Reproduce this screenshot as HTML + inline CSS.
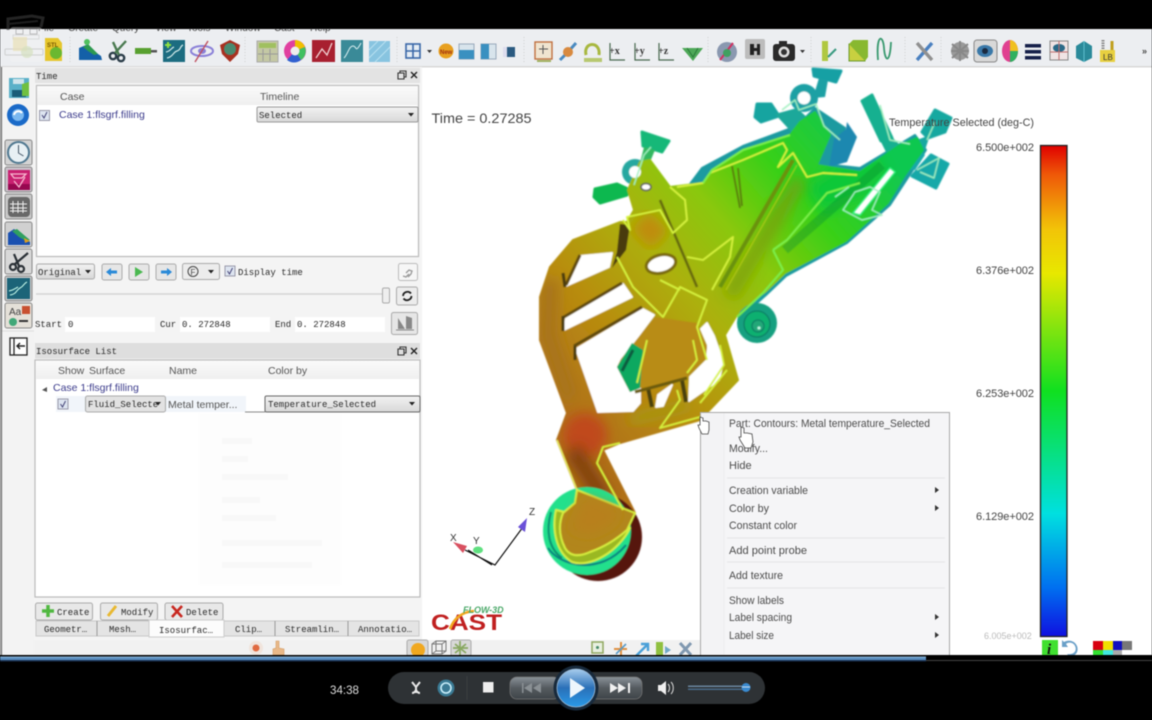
<!DOCTYPE html>
<html><head><meta charset="utf-8"><title>FLOW-3D CAST</title>
<style>
html,body{margin:0;padding:0;background:#000;width:1152px;height:720px;overflow:hidden}
svg{display:block;position:absolute;left:0;top:0;filter:blur(.45px)}
.m{font-family:"Liberation Mono",monospace;font-size:9px;fill:#2a2a2a}
.s{font-family:"Liberation Sans",sans-serif;font-size:10.5px;fill:#555}
.u{font-family:"Liberation Sans",sans-serif;font-size:10px;fill:#444}
.b{fill:#3c3c8c;font-family:"Liberation Sans",sans-serif;font-size:10.5px}
</style></head><body>
<svg width="1152" height="720" viewBox="0 0 1152 720" xmlns="http://www.w3.org/2000/svg">
<defs>
<linearGradient id="mg" gradientUnits="userSpaceOnUse" x1="570" y1="420" x2="880" y2="150">
<stop offset="0" stop-color="#b07018"/><stop offset=".22" stop-color="#b88c10"/><stop offset=".42" stop-color="#acb008"/><stop offset=".6" stop-color="#8ac808"/><stop offset=".78" stop-color="#38d018"/><stop offset="1" stop-color="#10c850"/></linearGradient>
<linearGradient id="cb" x1="0" y1="0" x2="0" y2="1"><stop offset="0" stop-color="#e00000"/><stop offset=".06" stop-color="#ef5a08"/><stop offset=".17" stop-color="#f2c408"/><stop offset=".26" stop-color="#e8e800"/><stop offset=".5" stop-color="#10e020"/><stop offset=".75" stop-color="#00e0e0"/><stop offset=".9" stop-color="#0070f0"/><stop offset="1" stop-color="#1010e0"/></linearGradient>
<linearGradient id="hd" x1="0" y1="0" x2="0" y2="1"><stop offset="0" stop-color="#fafafa"/><stop offset="1" stop-color="#efefef"/></linearGradient>
<linearGradient id="cmb" x1="0" y1="0" x2="0" y2="1"><stop offset="0" stop-color="#f2f2f2"/><stop offset="1" stop-color="#d8d8d8"/></linearGradient>
<linearGradient id="play" x1="0" y1="0" x2="0" y2="1"><stop offset="0" stop-color="#a8cdee"/><stop offset=".5" stop-color="#2a70b8"/><stop offset="1" stop-color="#2a9ae8"/></linearGradient>
<linearGradient id="seg" x1="0" y1="0" x2="0" y2="1"><stop offset="0" stop-color="#8a9298"/><stop offset=".5" stop-color="#555b60"/><stop offset="1" stop-color="#3e4448"/></linearGradient>
<filter id="bl" x="-50%" y="-50%" width="200%" height="200%"><feGaussianBlur stdDeviation="6"/></filter>
<filter id="soft" x="-5%" y="-5%" width="110%" height="110%"><feGaussianBlur stdDeviation=".5"/></filter>
<clipPath id="bc"><path d="M627 222L634 210L628 190L640 162L650 160L670 187L703 183L712 172L743 150L790 135L800 122L815 112L830 135L817 165L860 172L900 145L917 138L923 150L905 175L888 203L846 241L785 273L765 292L740 310L725 335L738 380L700 420L620 443L603 450L635 513L577 490L557 440L567 413L540 340L540 297L550 267L573 240L620 222Z"/></clipPath>
</defs>

<!-- app background -->
<rect x="0" y="29" width="1152" height="628" fill="#fff"/>
<rect x="0" y="29" width="1152" height="38" fill="#eceef1"/>
<rect x="0" y="66" width="1152" height="1.5" fill="#d8d8d8"/>
<rect x="0" y="67" width="422" height="590" fill="#f4f4f4"/>
<rect x="0" y="640" width="700" height="16" fill="#f1f1f1"/>
<rect x="0" y="67" width="1.5" height="590" fill="#555"/>
<text x="38" y="31" class="u">File</text><text x="68" y="31" class="u">Create</text><text x="112" y="31" class="u">Query</text><text x="155" y="31" class="u">View</text><text x="187" y="31" class="u">Tools</text><text x="225" y="31" class="u">Window</text><text x="274" y="31" class="u">Cast</text><text x="310" y="31" class="u">Help</text>

<!-- top black -->
<rect x="0" y="0" width="1152" height="28.500" fill="#000"/>

<!-- toolbar separators -->
<g stroke="#cfcfcf" stroke-dasharray="1 2">
<line x1="70" y1="37" x2="70" y2="64"/><line x1="245" y1="37" x2="245" y2="64"/><line x1="397" y1="37" x2="397" y2="64"/><line x1="524" y1="37" x2="524" y2="64"/><line x1="708" y1="37" x2="708" y2="64"/><line x1="811" y1="37" x2="811" y2="64"/><line x1="905" y1="37" x2="905" y2="64"/><line x1="941" y1="37" x2="941" y2="64"/>
</g>

<!-- top toolbar left -->
<path d="M45 38h13l4 5v18H45z" fill="#e6c62c"/><circle cx="56" cy="53" r="6" fill="#6ab830"/><text x="47" y="47" font-family="Liberation Sans" font-size="6" font-weight="bold" fill="#7a5a00">STL</text>
<path d="M79 60V48l7-3 6 5 9 6 1 4z" fill="#1460a8"/><path d="M83 47l5-3 4 4 6 6-4 1-6-4z" fill="#2c9a50"/><circle cx="87" cy="42" r="3" fill="#50c060"/>
<g fill="none" stroke="#2a3c48" stroke-width="2.400"><circle cx="113" cy="56" r="3.200"/><circle cx="121" cy="58" r="3.200"/><path d="M115 53l11-12M119 55l-6-13" stroke="#4a7a50"/></g>
<rect x="135" y="48" width="16" height="6" fill="#58a030"/><rect x="151" y="50" width="6" height="2.500" fill="#555"/>
<rect x="163" y="40" width="22" height="22" fill="#1c6c80"/><path d="M167 58c6-1 6-6 10-7s3-5 6-6M166 52c5-1 5-4 8-5" stroke="#cfe8e8" fill="none" stroke-width="1.200"/><path d="M168 42v6M165 45h6" stroke="#90e040" stroke-width="2"/>
<ellipse cx="202" cy="51" rx="11" ry="5" fill="none" stroke="#8a80d8" stroke-width="2"/><ellipse cx="202" cy="51" rx="4" ry="3" fill="#8a80d8"/><line x1="195" y1="62" x2="208" y2="41" stroke="#c05060" stroke-width="1.400"/>
<path d="M220 45l10-5 10 5-2 9-8 8-8-8z" fill="#a83020"/><circle cx="230" cy="49" r="6" fill="#4a8a70"/>
<rect x="257" y="41" width="21" height="21" fill="#c4c8a4" stroke="#aaa"/><rect x="259" y="43" width="17" height="5" fill="#a0c060"/><path d="M263 49v12M270 49v12M258 54h20" stroke="#999"/>
<circle cx="295" cy="51" r="11" fill="#e040a0"/><path d="M295 51V40a11 11 0 0 1 10 7z" fill="#f0c000"/><path d="M295 51l10-4a11 11 0 0 1-4 13z" fill="#40c060"/><path d="M295 51l6 9a11 11 0 0 1-14 0z" fill="#3060d0"/><circle cx="295" cy="51" r="4.500" fill="#eee"/>
<rect x="312" y="40" width="23" height="22" fill="#a82030"/><path d="M316 58l6-9 5 6 5-12" stroke="#f0d0d0" fill="none" stroke-width="1.300"/>
<rect x="341" y="40" width="22" height="22" fill="#3a8a98"/><path d="M344 58c4-4 5-12 9-12s2 8 8-3" stroke="#d8eef0" fill="none"/>
<rect x="369" y="41" width="21" height="21" fill="#88c4e0"/><path d="M369 50l9-9M369 58l17-17M375 62l15-15" stroke="#b8e0f0"/>
<rect x="406" y="44" width="14" height="14" fill="#e4ecf4" stroke="#3a68a8" stroke-width="1.600"/><path d="M413 44v14M406 51h14" stroke="#3a68a8" stroke-width="1.600"/><path d="M427 50h5l-2.500 3z" fill="#333"/>
<circle cx="446" cy="51" r="7.500" fill="#e8a020"/><text x="440" y="54" font-family="Liberation Sans" font-size="6" font-weight="bold" fill="#a03010">New</text>
<rect x="459" y="44" width="15" height="15" fill="#d8e4ec" stroke="#9ab"/><rect x="459" y="50" width="15" height="9" fill="#3a90c0"/>
<rect x="481" y="44" width="15" height="15" fill="#d8e4ec" stroke="#9ab"/><rect x="481" y="44" width="8" height="15" fill="#3a90c0"/>
<rect x="503" y="47" width="12" height="10" fill="#dde"/><rect x="507" y="47" width="8" height="10" fill="#2a5a80"/>
<rect x="535" y="42" width="17" height="17" fill="#f0e4d0" stroke="#c07040" stroke-width="1.400"/><path d="M543 45v9M539 49h9" stroke="#555"/><rect x="537" y="60" width="14" height="2" fill="#a0b060"/>
<path d="M560 60l8-8 8-9" stroke="#4a8ac0" stroke-width="3"/><circle cx="568" cy="52" r="5" fill="#d88a40"/>
<path d="M586 55c-3-14 15-14 13 0" fill="none" stroke="#a8b840" stroke-width="3"/><rect x="584" y="58" width="18" height="4" fill="#b8c870"/>
<g font-family="Liberation Serif" font-size="10" font-weight="bold" fill="#333"><text x="609" y="54">+x</text><text x="634" y="54">+y</text><text x="658" y="54">+z</text></g>
<path d="M610 43v17h15M635 43v17h15M659 43v17h15" fill="none" stroke="#4a6a50" stroke-width="1.200"/>
<path d="M682 48h21l-10 13z" fill="#4ea858"/><path d="M687 48l6 9 5-9" stroke="#2a7a3a" fill="none"/>
<circle cx="727" cy="52" r="10" fill="#8a98b0"/><path d="M720 60l13-17" stroke="#d03060" stroke-width="2"/><circle cx="727" cy="53" r="4" fill="#40a060"/>
<rect x="745" y="39" width="20" height="20" rx="2" fill="#bcbcbc"/><path d="M750 44h4v4h3v-4h3v11h-3v-4h-3v4h-4z" fill="#222"/>
<rect x="773" y="44" width="22" height="17" rx="3" fill="#2a2a2a"/><rect x="779" y="41" width="8" height="4" fill="#2a2a2a"/><circle cx="784" cy="52" r="5.500" fill="#ddd"/><circle cx="784" cy="52" r="3" fill="#333"/><path d="M800 50h5l-2.500 3z" fill="#333"/>
<path d="M822 41h6v20h-6z" fill="#b0c840"/><path d="M828 57l8-8" stroke="#3a9a80" stroke-width="2"/>
<rect x="849" y="44" width="16" height="17" fill="#c8d040" stroke="#6a9a30"/><path d="M849 44l4-4h15v17l-3 4" fill="#88b830"/>
<path d="M878 60c-2-26 5-26 6-12s6 16 7-6" fill="none" stroke="#3a9a70" stroke-width="1.800"/>
<path d="M917 60l15-17" stroke="#4a80c0" stroke-width="3.400"/><path d="M917 43l15 17" stroke="#909090" stroke-width="3.400"/>
<circle cx="960" cy="51" r="9" fill="#9a9a9a"/><path d="M952 44l16 14M968 44l-16 14M960 41v20M951 51h18" stroke="#888" stroke-width="2"/>
<rect x="974" y="40" width="23" height="22" rx="3" fill="#d8d8d8" stroke="#888"/><ellipse cx="985" cy="51" rx="8" ry="6" fill="#3a78a8"/><circle cx="985" cy="51" r="3" fill="#1a2a40"/>
<ellipse cx="1010" cy="51" rx="8" ry="11" fill="#e04090"/><path d="M1010 40a8 11 0 0 1 8 11h-8z" fill="#f0c020"/><path d="M1010 51h8a8 11 0 0 1-8 11z" fill="#30b060"/>
<path d="M1025 44h16v3.500h-16zM1025 50h16v3.500h-16zM1025 56h16v3.500h-16z" fill="#16204a"/>
<rect x="1050" y="41" width="18" height="19" fill="#f0e4e4" stroke="#888"/><ellipse cx="1059" cy="48" rx="6" ry="4" fill="#2a6a88"/><path d="M1059 41v19M1050 52h18" stroke="#c07070"/>
<path d="M1076 46l8-5 8 5v12l-8 4-8-4z" fill="#2a8a9a"/><path d="M1084 41v21" stroke="#60c0d0"/>
<rect x="1100" y="50" width="15" height="12" fill="#e8d040"/><text x="1103" y="60" font-family="Liberation Sans" font-size="8" fill="#333">LB</text><path d="M1112 41v9" stroke="#c0a020" stroke-width="3"/><path d="M1103 40v9" stroke="#888" stroke-dasharray="1.500 1" stroke-width="3"/>
<text x="1142" y="54" font-family="Liberation Sans" font-size="9" font-weight="bold" fill="#444">»</text>

<!-- left vertical toolbar -->
<rect x="0" y="67" width="34" height="590" fill="#f3f3f3"/>
<rect x="1" y="67" width="1" height="590" fill="#555"/>
<path d="M9 78h20v20H9z" fill="#5ab0c8"/><rect x="12" y="90" width="14" height="7" fill="#1a5c78"/><rect x="13" y="79" width="11" height="5" fill="#d0e4ec"/><path d="M22 84l7-2v14h-7z" fill="#70c040"/>
<circle cx="18" cy="115" r="11" fill="#1a6ac8"/><circle cx="18" cy="115" r="6" fill="#7ab8f0"/><path d="M14 115a4.500 4.500 0 0 1 8-2" stroke="#fff" fill="none" stroke-width="2"/>
<rect x="5" y="140" width="27" height="25" rx="2" fill="#d4d4d4" stroke="#888"/><circle cx="18.500" cy="152.500" r="10.500" fill="#e8f0f4" stroke="#507890" stroke-width="2"/><path d="M18.500 145v8l5 3" stroke="#456" fill="none"/>
<rect x="5" y="167" width="27" height="25" rx="2" fill="#c8c0c8" stroke="#888"/><rect x="8" y="170" width="22" height="20" fill="#c82070"/><rect x="8" y="184" width="22" height="6" fill="#980850"/><path d="M11 174h15l-4 4H14zM14 181l5 6 6-10" stroke="#f8b8d0" fill="none" stroke-width="1.300"/>
<rect x="5" y="194" width="27" height="25" rx="2" fill="#c8c8c8" stroke="#888"/><rect x="8" y="197" width="22" height="20" rx="4" fill="#686868"/><path d="M13 201v12M18 201v12M23 201v12M10 204h17M10 208h17M10 211h17" stroke="#eee"/>
<rect x="5" y="222" width="27" height="25" rx="2" fill="#d0d0d0" stroke="#888"/><path d="M8 245v-12l6-4 7 5 9 8v3z" fill="#1a50b0"/><path d="M12 231l5-2 7 6 6 5-4 1-7-4z" fill="#30a060"/><path d="M24 238l6 3-5 2z" fill="#e0a020"/>
<rect x="5" y="249" width="27" height="25" rx="2" fill="#d8d8d8" stroke="#888"/><g fill="none" stroke="#2a3036" stroke-width="2.200"><circle cx="13" cy="267" r="3"/><circle cx="21" cy="269" r="3"/><path d="M15 264l13-11M19 266l-5-12"/></g>
<rect x="5" y="276" width="27" height="25" rx="2" fill="#c8c8c8" stroke="#888"/><rect x="7" y="278" width="23" height="21" fill="#1c6478"/><path d="M10 295c7-1 6-5 10-7s4-5 7-6M9 291c5-1 7-3 9-4" stroke="#cfe" fill="none"/>
<rect x="5" y="303" width="27" height="25" rx="2" fill="#e4e0d8" stroke="#888"/><text x="9" y="315" font-family="Liberation Sans" font-size="10" fill="#444">Aa</text><rect x="22" y="306" width="8" height="8" fill="#c85030"/><circle cx="13" cy="322" r="4" fill="#40a878"/><path d="M19 321h9" stroke="#333" stroke-width="2"/>
<line x1="2" y1="331" x2="34" y2="331" stroke="#ddd"/>
<rect x="10" y="338" width="17" height="17" fill="#fff" stroke="#222" stroke-width="1.300"/><path d="M14 338v17" stroke="#222" stroke-width="1.300"/><path d="M25 346h-8m3-3l-3 3 3 3" fill="none" stroke="#222" stroke-width="1.400"/>

<!-- TIME panel -->
<rect x="35" y="68" width="385" height="15" fill="#e3e3e3"/>
<text x="36" y="79" class="m">Time</text>
<path d="M398 73h6v6h-6zM400 73v-2h6v6h-2" fill="none" stroke="#333" stroke-width="1.100"/>
<path d="M411 72l6 6m0-6l-6 6" stroke="#222" stroke-width="1.400"/>
<rect x="36.500" y="85.500" width="382" height="171" fill="#fff" stroke="#bbb" stroke-width="1.200"/>
<rect x="37" y="86" width="381" height="19" fill="url(#hd)"/>
<text x="60" y="100" class="s">Case</text><text x="260" y="100" class="s">Timeline</text>
<rect x="39.500" y="110.500" width="10" height="10" fill="#dde4f0" stroke="#99a"/><path d="M42 115l2 3 3-6" stroke="#447" fill="none"/>
<text x="59" y="118" class="b">Case 1:flsgrf.filling</text>
<rect x="257" y="107" width="161" height="15" rx="1.500" fill="url(#cmb)" stroke="#999"/>
<text x="259" y="118" class="m">Selected</text><path d="M408 113h6l-3 3.500z" fill="#222"/>

<!-- controls -->
<rect x="36.500" y="264" width="58" height="15" rx="2" fill="url(#cmb)" stroke="#aaa"/><text x="38" y="275" class="m">Original</text><path d="M85 270h6l-3 3.500z" fill="#222"/>
<rect x="102" y="264" width="20" height="16" rx="2" fill="#e6e6e6" stroke="#aaa"/><path d="M106 272l5-4v2.500h6v3h-6v2.500z" fill="#2a8ad8"/>
<rect x="129" y="264" width="20" height="16" rx="2" fill="#e6e6e6" stroke="#aaa"/><path d="M135 267l8 5-8 5z" fill="#4ab850"/>
<rect x="156" y="264" width="20" height="16" rx="2" fill="#e6e6e6" stroke="#aaa"/><path d="M172 272l-5-4v2.500h-6v3h6v2.500z" fill="#2a8ad8"/>
<rect x="182.500" y="263.500" width="37" height="16" rx="2" fill="#ececec" stroke="#aaa"/><circle cx="193" cy="271.500" r="5" fill="none" stroke="#444"/><text x="190.500" y="275" font-family="Liberation Sans" font-size="8" fill="#444">F</text><path d="M208 270h6l-3 3.500z" fill="#222"/>
<rect x="225" y="266" width="10" height="10" fill="#dde4f0" stroke="#99a"/><path d="M227.500 271l2 3 3-6" stroke="#447" fill="none"/>
<text x="238" y="275" class="m">Display time</text>
<rect x="398.500" y="263.500" width="19" height="17" rx="2" fill="#f6f6f6" stroke="#bbb"/><path d="M403 276l3 1 3-3m-3-1l3-3 3 1-1 3-3 3" fill="none" stroke="#999" stroke-width="1.300"/>
<line x1="36" y1="294" x2="384" y2="294" stroke="#d4d4d4" stroke-width="1.500"/>
<rect x="382.500" y="288" width="7" height="15" rx="1.500" fill="#eee" stroke="#aaa"/>
<rect x="396.500" y="287" width="21" height="18" rx="2" fill="#ececec" stroke="#aaa"/><path d="M403 296a4.500 4.500 0 0 1 8-2.500M411.500 296a4.500 4.500 0 0 1-8 2.500" fill="none" stroke="#222" stroke-width="1.800"/>
<text x="35" y="327" class="m">Start</text><rect x="65" y="317" width="90" height="15" fill="#fff"/><text x="68" y="327" class="m">0</text>
<text x="160" y="327" class="m">Cur</text><rect x="180" y="317" width="90" height="15" fill="#fff"/><text x="182" y="327" class="m">0. 272848</text>
<text x="275" y="327" class="m">End</text><rect x="295" y="317" width="90" height="15" fill="#fff"/><text x="297" y="327" class="m">0. 272848</text>
<rect x="391.500" y="312.500" width="26" height="22" rx="2" fill="#e6e6e6" stroke="#aaa"/><path d="M398 318v11h7zM406 316l6 2v11h-6z" fill="#888"/><path d="M396 330h18" stroke="#888"/>

<!-- ISOSURFACE panel -->
<rect x="35" y="343" width="385" height="15.500" fill="#dedede"/>
<text x="36" y="354" class="m">Isosurface List</text>
<path d="M398 349h6v6h-6zM400 349v-2h6v6h-2" fill="none" stroke="#333" stroke-width="1.100"/>
<path d="M411 348l6 6m0-6l-6 6" stroke="#222" stroke-width="1.400"/>
<rect x="35" y="360" width="385" height="237" fill="#fff" stroke="#bbb" stroke-width="1.200"/>
<rect x="36" y="361" width="383" height="18" fill="url(#hd)"/>
<text x="58" y="374" class="s">Show</text><text x="89" y="374" class="s">Surface</text><text x="169" y="374" class="s">Name</text><text x="268" y="374" class="s">Color by</text>
<path d="M42 390l5-3v5z" fill="#555"/>
<text x="53" y="391" class="b">Case 1:flsgrf.filling</text>
<rect x="56" y="396" width="190" height="16" fill="#f1f5fa"/>
<rect x="58" y="399" width="10" height="10" fill="#dde4f0" stroke="#99a"/><path d="M60.500 404l2 3 3-6" stroke="#447" fill="none"/>
<rect x="85.500" y="396" width="80" height="16" rx="2" fill="#e2e2e2" stroke="#aaa"/><text x="88" y="407" class="m">Fluid_Selecte</text><path d="M155 402h6l-3 3.500z" fill="#222"/>
<text x="168" y="408" class="s">Metal temper...</text>
<path d="M245 412h20" stroke="#888"/>
<rect x="265" y="396" width="155" height="16" rx="1.500" fill="url(#cmb)" stroke="#666"/><text x="268" y="407" class="m" font-size="8.500">Temperature_Selected</text><path d="M409 402h6l-3 3.500z" fill="#222"/>
<rect x="199" y="413" width="142" height="172" fill="#fdfdfd"/>
<g fill="#f8f8f8"><rect x="222" y="438" width="30" height="6"/><rect x="222" y="456" width="26" height="6"/><rect x="222" y="474" width="66" height="6"/><rect x="222" y="497" width="38" height="6"/><rect x="222" y="515" width="54" height="6"/><rect x="222" y="540" width="100" height="6"/><rect x="222" y="562" width="90" height="6"/></g>

<!-- action buttons -->
<rect x="35.500" y="603" width="57" height="17" rx="2" fill="#e8e8e8" stroke="#aaa"/><path d="M42 611h12M48 605v12" stroke="#50b840" stroke-width="3.500"/><text x="57" y="615" class="m">Create</text>
<rect x="100.500" y="603" width="57" height="17" rx="2" fill="#e8e8e8" stroke="#aaa"/><path d="M108 616l8-10" stroke="#e8b830" stroke-width="3"/><text x="121" y="615" class="m">Modify</text>
<rect x="165" y="603" width="58" height="17" rx="2" fill="#e8e8e8" stroke="#aaa"/><path d="M172 606l10 11m0-11l-10 11" stroke="#c82820" stroke-width="2.600"/><text x="186" y="615" class="m">Delete</text>

<!-- tabs -->
<rect x="36" y="621" width="383" height="15" fill="#e4e4e4" stroke="#c8c8c8"/>
<path d="M97 621v15M275 621v15M348 621v15" stroke="#999"/>
<rect x="149" y="620" width="75" height="17" fill="#fcfcfc" stroke="#ccc"/>
<text x="44" y="632" class="m">Geometr…</text><text x="109" y="632" class="m">Mesh…</text><text x="159" y="633" class="m">Isosurfac…</text><text x="235" y="632" class="m">Clip…</text><text x="285" y="632" class="m">Streamlin…</text><text x="358" y="632" class="m">Annotatio…</text>

<!-- bottom bar icons -->
<circle cx="256" cy="648" r="7" fill="#f0e4dc"/><circle cx="256" cy="648" r="3.500" fill="#e06a40"/>
<path d="M273 655v-6l3-1v-7h3v7l5 1v6z" fill="#e8b888" stroke="#d49a60" stroke-width=".6"/>
<rect x="407" y="640" width="21" height="16" rx="2" fill="#d8d8d8" stroke="#aaa"/><circle cx="418" cy="650" r="7" fill="#f0a820"/>
<path d="M432 644h10v10h-10zM436 641h10v10h-10zM432 644l4-3M442 644l4-3M442 654l4-3M432 654l4-3" fill="none" stroke="#777"/>
<rect x="451" y="640" width="20" height="16" rx="2" fill="#d8d8d8" stroke="#aaa"/><path d="M455 644l11 9m0-9l-11 9M460 641v14M453 648h15" stroke="#88a860" stroke-width="1.700"/>
<rect x="592" y="642" width="11" height="11" fill="#e8f0e0" stroke="#90a860" stroke-width="1.500"/><circle cx="597.500" cy="647.500" r="1.500" fill="#486"/>
<path d="M614 649h13M621 642v13" stroke="#e09040" stroke-width="2"/><path d="M616 654l10-10" stroke="#5a9ac8" stroke-width="1.600"/>
<path d="M636 656l12-12m-7 0h7v7" fill="none" stroke="#4aa0d8" stroke-width="2.400"/>
<rect x="656" y="642" width="7" height="14" fill="#90c040"/><path d="M665 646l6 4-6 4z" fill="#70a8c8"/>
<path d="M680 643l11 12m0-12l-11 12" stroke="#8098b0" stroke-width="3"/>

<!-- 3D MODEL -->
<g filter="url(#soft)" stroke-linejoin="round">
<!-- teal back layer -->
<path d="M690 184L702 168L743 146L797 126L815 108L845 128L832 165L860 168L915 135L926 150L890 205L847 243L786 276L766 295L740 318Z" fill="#1a9aa0" stroke="#1a9aa0" stroke-width="2"/>
<path d="M847 122L846 129L834 139L829 167L847 162L857 137Z" fill="#1f88b0"/>
<!-- tabs and rings -->
<g stroke-width="3">
<path d="M813 69L841 71L836 82L814 76Z" fill="#16a0a4" stroke="#16a0a4"/>
<path d="M819 78L828 80L825 97L813 98Z" fill="#1aa0a4"/>
<circle cx="804" cy="98" r="14" fill="#1aa0a4"/>
<path d="M757 104L771 104L779 116L761 122L755 117Z" fill="#14a4a0" stroke="#14a4a0"/>
<path d="M775 114L797 108L812 122L795 136Z" fill="#1ea89a"/>
<path d="M862 101L872 95L892 138L881 141Z" fill="#16b090" stroke="#16b090"/>
<path d="M935 110L951 118L945 132L928 138L922 132Z" fill="#15a8a0" stroke="#15a8a0"/>
<path d="M931 155L948 164L936 188L912 176Z" fill="#15a8a8" stroke="#15a8a8"/>
<path d="M880 140L893 138L900 145L888 156Z" fill="#16b090"/>
<path d="M917 140L930 135L925 150Z" fill="#15a8a0"/>
<path d="M915 170L925 155L918 148L905 170Z" fill="#15a8a8"/>
<path d="M642 132L669 141L662 152L643 146Z" fill="#12b878" stroke="#12b878"/>
<path d="M644 147L655 150L650 162L640 163Z" fill="#30b860"/>
<circle cx="635" cy="172" r="13" fill="#28a8a0"/>
<path d="M595 189L617 184L628 189L627 195L600 203L594 197Z" fill="#10b850" stroke="#10b850"/>
</g>
<!-- main body -->
<path d="M627 222L634 210L628 190L640 162L650 160L670 187L703 183L712 172L743 150L790 135L800 122L815 112L830 135L817 165L860 172L900 145L917 138L923 150L905 175L888 203L846 241L785 273L765 292L740 310L725 335L738 380L700 420L620 443L603 450L635 513L577 490L557 440L567 413L540 340L540 297L550 267L573 240L620 222Z" fill="url(#mg)" stroke="url(#mg)" stroke-width="2"/>
<!-- warm zones -->
<g clip-path="url(#bc)">
<ellipse cx="585" cy="435" rx="22" ry="22" fill="#c0481a" filter="url(#bl)"/>
<path d="M572 450L605 500" stroke="#7a3a10" stroke-width="18" filter="url(#bl)" opacity=".85"/>
<path d="M550 280L548 335L570 400" stroke="#a8741a" stroke-width="18" fill="none" filter="url(#bl)"/>
<path d="M630 420L690 405" stroke="#a89410" stroke-width="14" filter="url(#bl)"/>
<path d="M640 220L660 240" stroke="#c08c10" stroke-width="26" filter="url(#bl)"/>
<path d="M815 200L880 160" stroke="#10c838" stroke-width="34" filter="url(#bl)"/>
<path d="M730 295L800 180" stroke="#7a9c10" stroke-width="14" filter="url(#bl)" opacity=".8"/>
</g>
<!-- white holes -->
<g fill="#fff" stroke="#fff" stroke-width="2">
<path d="M566 286L580 256L612 253L609 267Z"/>
<path d="M564 330L566 318L623 284L632 297Z"/>
<path d="M576 349L643 309L654 315L621 359L617 367L630 392L640 388L640 403L633 411L598 412Z"/>
<path d="M701 329L708 345L707 360L690 377L689 401L719 380L723 362L714 336L707 323Z"/>
<path d="M658 395L672 385L663 406L656 407Z"/>
</g>
<ellipse cx="661" cy="264" rx="15" ry="9" transform="rotate(-14 661 264)" fill="#fff" stroke="#7a6a10" stroke-width="3"/>
<ellipse cx="646" cy="187" rx="5" ry="3.500" fill="#fff" stroke="#555" stroke-width="1.500"/>
<circle cx="635" cy="172" r="6" fill="#fff"/>
<circle cx="804" cy="98" r="6.500" fill="#fff"/>
<path d="M890 168L895 172L860 215L853 213Z" fill="#fff" stroke="#30f080" stroke-width="1.500"/>
<!-- dark shading -->
<path d="M620 224L617 252L612 268L626 250L630 225Z" fill="#4a3a08"/>
<path d="M566 285L580 255M564 317L622 283M574 346L642 307" stroke="#5e4a08" stroke-width="3" fill="none"/>
<path d="M565 287L563 273M563 331V316M575 360V346" stroke="#4a3a08" stroke-width="3"/>
<path d="M720 287L793 160" stroke="#6a9210" stroke-width="4" fill="none"/>
<path d="M726 290L797 165" stroke="#c0d020" stroke-width="1.200" fill="none" opacity=".7"/>
<path d="M732 166L740 208M738 168L742 206" stroke="#5a7a10" stroke-width="1.800" fill="none"/>
<path d="M660 200L697 287" stroke="#5a5a10" stroke-width="2.500" fill="none" opacity=".85"/>
<path d="M785 250L882 165" stroke="#0a8a30" stroke-width="9" fill="none" opacity=".35"/>
<!-- middle block -->
<path d="M621 359L655 317L697 323L707 347L705 360L687 377L640 388L630 392L617 367Z" fill="#b88c14"/>
<path d="M617 367L632 343L643 350L640 388L630 392Z" fill="#10a860"/>
<path d="M622 371L633 350" stroke="#0a5a40" stroke-width="3"/>
<path d="M648 388L652 407M682 380L686 402" stroke="#4a4008" stroke-width="4" fill="none"/>
<path d="M635 392L687 378" stroke="#6a5a10" stroke-width="3"/>
<!-- boss -->
<circle cx="757" cy="323" r="20" fill="#12a080"/><circle cx="757" cy="324" r="13" fill="#10b070" stroke="#0a7060"/><circle cx="758" cy="326" r="6" fill="#20a878" stroke="#0a7060"/><circle cx="759" cy="328" r="1.500" fill="#cfe"/>
<!-- bowl -->
<circle cx="598" cy="537" r="44" fill="#561208"/>
<circle cx="587" cy="531" r="44" fill="#24e08c"/>
<path d="M548 548C560 566 600 576 626 545" fill="none" stroke="#087a80" stroke-width="2"/>
<path d="M551 512C546 530 548 548 562 558" fill="none" stroke="#0a8a70" stroke-width="2"/>
<path d="M556 510C552 530 556 552 572 562C590 568 618 552 630 528Z" fill="#9ab820" stroke="#d8f040" stroke-width="2"/>
<path d="M577 490L635 513L627 530Q610 545 590 552Q572 560 565 548Q556 530 563 513L575 503Z" fill="#b2861c" stroke="#d8f040" stroke-width="2"/>
<path d="M585 497L620 510L612 525L590 535L570 530Z" fill="#b8801a" filter="url(#bl)"/>
<!-- yellow contours -->
<g fill="none" stroke="#d6f23c" stroke-width="1.900">
<path d="M623 220L630 230L627 217L660 210L673 233L687 220L685 200L670 187"/>
<path d="M677 187L703 183L710 173L743 160L783 143L787 150L778 167L793 153L807 177L823 173L857 175"/>
<path d="M617 257L633 287L663 317L680 287L707 300L697 327L707 360"/>
<path d="M687 257L703 260L733 237L730 257L712 290"/>
<path d="M647 340L637 383M693 340L697 360L687 373"/>
<path d="M677 390L680 400L660 428L700 417"/>
<path d="M620 443L603 447L597 463L623 510"/>
<path d="M557 440L577 490" stroke="#e8f060" stroke-width="1.500"/>
<path d="M727 370L700 403"/>
<path d="M720 345L724 365L704 395"/>
<path d="M660 280L680 290"/>
</g>
<g fill="none" stroke="#7cf04a" stroke-width="2">
<path d="M773 250L787 240L827 193L860 183"/>
<path d="M773 250L783 270L763 293L737 317"/>
<path d="M703 183L712 170L743 150L790 135"/>
</g>
<g fill="none" stroke="#a0f0c0" stroke-width="1.500">
<path d="M782 110L795 100L799 110L816 104L824 126L840 140"/>
<path d="M880 105L890 140L910 144"/>
<path d="M935 122L927 140"/>
<path d="M917 170L939 158L934 178L920 172"/>
<path d="M843 210L855 192L870 187L880 192L872 210L882 215L862 220ZM835 197L849 187"/>
<path d="M634 185L644 155L651 147"/>
</g>
</g>

<!-- Axes -->
<g fill="none" stroke="#111" stroke-width="1.200"><path d="M465 550L495 565L523 527M468 550L492 565"/></g>
<path d="M453 542L467 546L463 553Z" fill="#d85060"/><ellipse cx="478" cy="550" rx="5" ry="3.500" fill="#60e080"/><path d="M527 518L518 527L525 532Z" fill="#6a50d8"/>
<g font-family="Liberation Sans" font-size="10" fill="#333"><text x="450" y="541">X</text><text x="473" y="544">Y</text><text x="529" y="515">Z</text></g>

<!-- Text overlays -->
<text x="431.500" y="123" font-family="Liberation Sans" font-size="14" fill="#444" textLength="100" lengthAdjust="spacingAndGlyphs">Time = 0.27285</text>
<text x="889" y="126" font-family="Liberation Sans" font-size="11" fill="#444" textLength="145" lengthAdjust="spacingAndGlyphs">Temperature Selected (deg-C)</text>

<!-- colour bar -->
<rect x="1040.500" y="145.500" width="26.500" height="491" fill="url(#cb)" stroke="#222" stroke-width="1.300"/>
<g font-family="Liberation Sans" font-size="11" fill="#444">
<text x="976" y="151" textLength="58">6.500e+002</text>
<text x="976" y="274" textLength="58">6.376e+002</text>
<text x="976" y="397" textLength="58">6.253e+002</text>
<text x="976" y="520" textLength="58">6.129e+002</text>
</g>

<!-- bottom right icons -->
<rect x="950" y="638" width="202" height="19" fill="#fff"/>
<text x="984" y="639" font-family="Liberation Sans" font-size="9" fill="#bbb">6.005e+002</text>
<rect x="1042" y="640" width="16" height="16" fill="#40e030"/><text x="1047" y="654" font-family="Liberation Serif" font-style="italic" font-weight="bold" font-size="15" fill="#111">i</text>
<path d="M1067 654c8 1 10-4 8-8s-7-4-9-2l2 3-6 0 0-7 2 2c5-3 11-1 13 4 2 5-1 11-8 10z" fill="#6aa0c8"/>
<rect x="1093" y="641" width="10" height="9" fill="#d80010"/><rect x="1103" y="641" width="10" height="9" fill="#f0e000"/><rect x="1113" y="641" width="9" height="9" fill="#1010c0"/><rect x="1122" y="641" width="10" height="9" fill="#777"/>
<rect x="1093" y="650" width="10" height="6" fill="#30e030"/><rect x="1103" y="650" width="10" height="6" fill="#40e8e0"/><rect x="1113" y="650" width="9" height="6" fill="#aaa"/>

<!-- watermark logo -->
<g opacity=".6">
<rect x="10" y="27" width="32" height="35" rx="3" fill="#f3f3f3" opacity=".6"/>
<path d="M8 30V19l24-3 11 2-2 9" fill="none" stroke="#3c3c3c" stroke-width="3"/>
<path d="M8 24l30-3" stroke="#333" stroke-width="2"/>
<rect x="13" y="35" width="26" height="4" fill="none" stroke="#ccc"/>
<rect x="5" y="49" width="38" height="6" rx="1" fill="none" stroke="#bbb"/>
<rect x="13" y="37" width="14" height="14" fill="#e8d890" opacity=".7"/><circle cx="27" cy="52" r="6" fill="#c8d8a0" opacity=".7"/>
<rect x="16" y="29" width="7" height="5" fill="none" stroke="#999"/><rect x="30" y="29" width="7" height="5" fill="none" stroke="#999"/>
</g>

<!-- context menu -->
<rect x="700.500" y="412.500" width="249" height="244" fill="#f5f5f7" stroke="#a8a8a8"/>
<rect x="701" y="413" width="22" height="243" fill="#f3f3f5"/>
<line x1="724" y1="413" x2="724" y2="656" stroke="#ececee"/>
<g stroke="#e4e4e6"><line x1="727" y1="478" x2="945" y2="478"/><line x1="727" y1="538" x2="945" y2="538"/><line x1="727" y1="562" x2="945" y2="562"/><line x1="727" y1="588" x2="945" y2="588"/></g>
<g font-family="Liberation Sans" font-size="11" fill="#4c4c4c">
<text x="729" y="427" textLength="201" lengthAdjust="spacingAndGlyphs">Part: Contours: Metal temperature_Selected</text>
<text x="729" y="452" textLength="39" lengthAdjust="spacingAndGlyphs">Modify...</text>
<text x="729" y="469">Hide</text>
<text x="729" y="494" textLength="79" lengthAdjust="spacingAndGlyphs">Creation variable</text>
<text x="729" y="512" textLength="40" lengthAdjust="spacingAndGlyphs">Color by</text>
<text x="729" y="529" textLength="68" lengthAdjust="spacingAndGlyphs">Constant color</text>
<text x="729" y="554" textLength="78" lengthAdjust="spacingAndGlyphs">Add point probe</text>
<text x="729" y="579" textLength="54" lengthAdjust="spacingAndGlyphs">Add texture</text>
<text x="729" y="604" textLength="55" lengthAdjust="spacingAndGlyphs">Show labels</text>
<text x="729" y="621" textLength="63" lengthAdjust="spacingAndGlyphs">Label spacing</text>
<text x="729" y="639" textLength="45" lengthAdjust="spacingAndGlyphs">Label size</text>
</g>
<path d="M935 487l4 3-4 3zM935 505l4 3-4 3zM935 614l4 3-4 3zM935 632l4 3-4 3z" fill="#333"/>
<!-- cursors -->
<path d="M700 420l0-3 3 1 0 3 3 0 3 1 0 8-1 4h-6l-3-6-1-3 2 0z" fill="#fff" stroke="#444" stroke-width=".8"/>
<path d="M741 430l0-3 3 1 0 5 3 0 5 1 1 8-2 6h-6l-5-8-1-3 2 0z" fill="#fff" stroke="#444" stroke-width=".8"/>

<!-- CAST logo -->
<text x="431" y="630" font-family="Liberation Sans" font-size="22" font-weight="bold" fill="#c02020" textLength="71" lengthAdjust="spacingAndGlyphs">CAST</text>
<path d="M450 629C454 618 462 612 474 611" fill="none" stroke="#f0a820" stroke-width="2.600"/>
<text x="463" y="613" font-family="Liberation Sans" font-size="9" font-weight="bold" font-style="italic" fill="#4aa868">FLOW-3D</text>

<!-- player -->
<rect x="0" y="655" width="1152" height="65" fill="#000"/>
<rect x="0" y="656.500" width="926" height="1" fill="#8ab4d8"/>
<rect x="0" y="657.500" width="926" height="2.500" fill="#5a8ec0"/>
<rect x="0" y="660" width="926" height="1.500" fill="#1a3050"/>
<rect x="926" y="660" width="226" height="1" fill="#444"/>
<text x="330" y="694" font-family="Liberation Sans" font-size="12" fill="#ddd" textLength="29" lengthAdjust="spacingAndGlyphs">34:38</text>
<rect x="388" y="672" width="377" height="32" rx="16" fill="#2e3235"/>
<g fill="none" stroke="#e8e8e8" stroke-width="2"><path d="M412 682l4 5 4-5M416 687v6M412 693c2 0 3-1 4-3M420 693c-2 0-3-1-4-3"/></g>
<circle cx="446" cy="688" r="8.500" fill="#3a7a94"/><circle cx="446" cy="688" r="5" fill="none" stroke="#c8eefa" stroke-width="1.600"/>
<line x1="467" y1="676" x2="467" y2="700" stroke="#3a3e41"/>
<rect x="483" y="682" width="10.500" height="10.500" fill="#eee"/>
<rect x="510" y="677" width="50" height="22" rx="7" fill="url(#seg)" stroke="#777" stroke-width=".7"/>
<rect x="590" y="677" width="52" height="22" rx="7" fill="url(#seg)" stroke="#777" stroke-width=".7"/>
<path d="M522 683v10h1.500v-10zM532 683l-8 5 8 5zM541 683l-8 5 8 5z" fill="#8a9094"/>
<circle cx="576" cy="688" r="22.500" fill="#182a3c"/>
<circle cx="576" cy="688" r="19" fill="url(#play)" stroke="#9ab8d4" stroke-width=".8"/>
<path d="M570 678l15 10-15 10z" fill="#eef6fc"/>
<path d="M610 683l8 5-8 5zM618 683l8 5-8 5zM628 683h2v10h-2z" fill="#f0f0f0"/>
<path d="M658 685h3l5-4v14l-5-4h-3z" fill="#f0f0f0"/><path d="M668 684c2 2 2 6 0 8M671 682c3 3 3 9 0 12" fill="none" stroke="#ddd"/>
<rect x="688" y="685.500" width="56" height="1.500" fill="#6a86a0"/><rect x="688" y="688.500" width="56" height="1.500" fill="#4a6a88"/>
<circle cx="746" cy="687.500" r="4.500" fill="#3a8ad0"/><path d="M742 687h8" stroke="#cde"/>
</svg>
</body></html>
